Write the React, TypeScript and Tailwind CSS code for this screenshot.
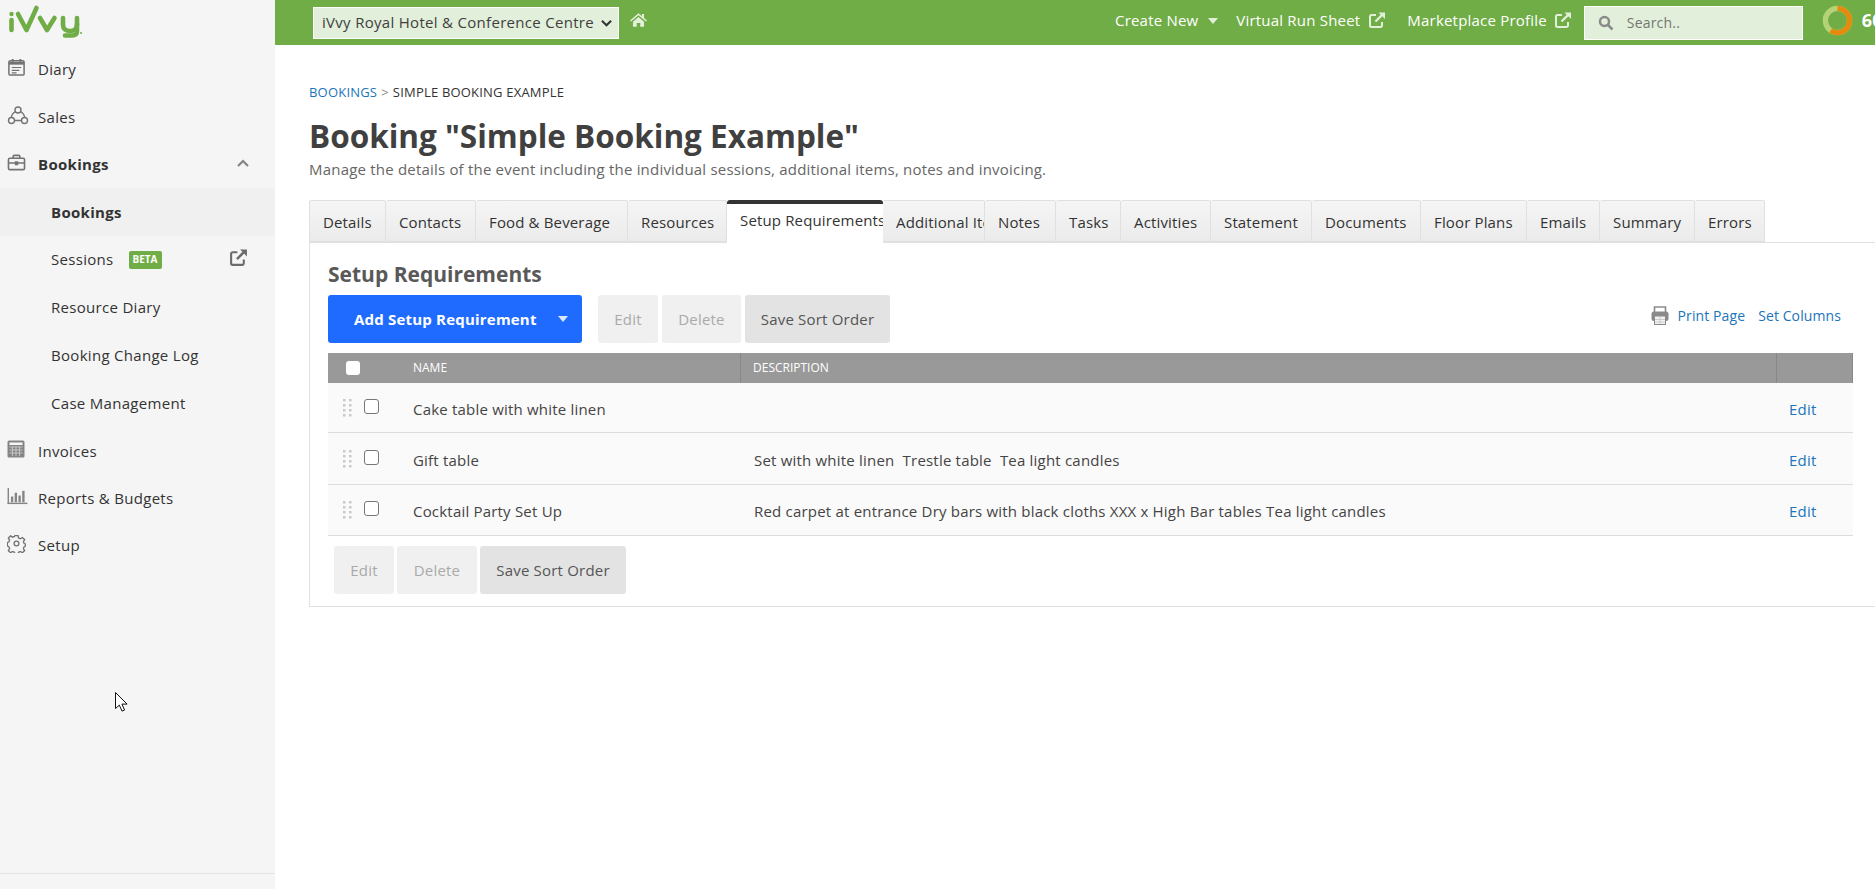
import React from "react";

const font = { fontFamily: '"Open Sans", sans-serif' };

function Ext({ className = "" }: { className?: string }) {
  return (
    <svg viewBox="0 0 18 18" className={className} fill="none" stroke="currentColor">
      <path d="M8 4H3.500A1.500 1.500 0 0 0 2 5.500v9A1.500 1.500 0 0 0 3.500 16h9a1.500 1.500 0 0 0 1.500-1.500V11" strokeWidth="2" />
      <path d="M7.500 10.500 15 3" strokeWidth="2.400" />
      <path d="M10.500 1.500h6.500V8z" fill="currentColor" stroke="none" />
    </svg>
  );
}

function Logo() {
  return (
    <svg viewBox="0 0 90 42" className="w-[90px] h-[42px]" fill="none" stroke="#70ad47" strokeWidth="4.600" strokeLinecap="round" strokeLinejoin="round">
      <circle cx="11.500" cy="14" r="2.200" fill="#70ad47" stroke="none" />
      <path d="M11.500 20v10" />
      <path d="M18 14 26.500 30 36.500 8" />
      <path d="M40 18 47 30 54.500 18" />
      <path d="M63 18v7c0 4 3 6 7 6s7-2 7-6v-7" />
      <path d="M77 24v7c0 3-2 4.500-5 4.500h-7" />
      <circle cx="81" cy="33" r="1" fill="#70ad47" stroke="none" />
    </svg>
  );
}

const G = "fill-none stroke-[#737373]";

const icons: Record<string, React.ReactNode> = {
  diary: (
    <svg viewBox="0 0 20 20" className={`w-[19px] h-[19px] ${G}`} strokeWidth="1.600">
      <rect x="2" y="3" width="16" height="15" rx="1.500" />
      <path d="M2 5.500h16" strokeWidth="3" />
      <path d="M6 1v3M14 1v3" strokeWidth="2" />
      <path d="M5 10h10M5 13h8M5 15.700h5" strokeWidth="1.200" />
    </svg>
  ),
  sales: (
    <svg viewBox="0 0 22 20" className={`w-[22px] h-[20px] ${G}`} strokeWidth="1.400">
      <circle cx="11" cy="5" r="3" />
      <circle cx="4.500" cy="15.500" r="3" />
      <circle cx="17.500" cy="15.500" r="3" />
      <path d="M8.500 6.500C6 8 4.500 10 4.300 12.500M13.500 6.500c2.500 1.500 4 3.500 4.200 6M7.500 15.500h7" />
    </svg>
  ),
  bookings: (
    <svg viewBox="0 0 20 18" className={`w-[19px] h-[17px] ${G}`} strokeWidth="1.700">
      <rect x="1.500" y="4.500" width="17" height="12" rx="1.500" />
      <path d="M6.500 4.500V2.500a1 1 0 0 1 1-1h5a1 1 0 0 1 1 1v2M1.500 9.500h17M9 8.500h2v2.500H9z" />
    </svg>
  ),
  invoices: (
    <svg viewBox="0 0 18 18" className="w-[18px] h-[18px]">
      <rect x="0.500" y="0.500" width="17" height="17" rx="1.500" fill="#858585" />
      <rect x="2.500" y="2.500" width="13" height="2.500" fill="#f5f5f5" />
      <path d="M2.500 7h13M2.500 10h13M2.500 13h13M5.500 6.500V16M9 6.500V16M12.500 6.500V16" stroke="#c4c4c4" strokeWidth="1" />
    </svg>
  ),
  reports: (
    <svg viewBox="0 0 22 18" className="w-[21px] h-[17px]" fill="#858585">
      <rect x="0.500" y="0" width="1.500" height="17" />
      <rect x="0.500" y="15.500" width="21" height="1.500" />
      <rect x="4" y="9" width="2.500" height="6" />
      <rect x="8" y="5" width="2.500" height="10" />
      <rect x="12" y="8" width="2.500" height="7" />
      <rect x="16" y="3" width="2.500" height="12" />
    </svg>
  ),
  setup: (
    <svg viewBox="0 0 24 24" className={`w-[19px] h-[19px] ${G}`} strokeWidth="1.700">
      <path d="M10 2h4l.6 3 2.300 1 2.600-1.600 2.800 2.800-1.600 2.600 1 2.300 1.800.6v2.400l-1.800.9-1 2.300 1.600 2.600-2.800 2.800-2.600-1.600-2.300 1-.6 1.800h-4l-.6-1.800-2.300-1-2.600 1.600-2.800-2.800 1.600-2.600-1-2.300-1.800-.9V10.700l1.800-.6 1-2.300-1.600-2.600 2.800-2.800 2.600 1.600 2.300-1z" />
      <circle cx="12" cy="12" r="3" />
    </svg>
  ),
};

function TopItem({ icon, label, bold }: { icon: string; label: string; bold?: boolean }) {
  return (
    <div className="h-[47.300px] flex items-center pl-[7px] pr-[26px] shrink-0">
      <span className="w-[31px] flex justify-start items-center -mt-[4px]">{icons[icon]}</span>
      <span className={`text-[15px] tracking-[0.3px] text-[#333] ${bold ? "font-bold" : ""}`}>{label}</span>
      {bold && (
        <svg viewBox="0 0 12 8" className="w-[12px] h-[8px] ml-auto mb-[3px]" fill="none" stroke="#858585" strokeWidth="2.200">
          <path d="M1 7l5-5 5 5" />
        </svg>
      )}
    </div>
  );
}

function SubItem({ label, active, beta }: { label: string; active?: boolean; beta?: boolean }) {
  return (
    <div className={`h-[47.900px] flex items-center pl-[51px] pr-[27px] shrink-0 ${active ? "bg-[#f0f0f0]" : ""}`}>
      <span className={`text-[15px] tracking-[0.3px] text-[#333] ${active ? "font-bold" : ""}`}>{label}</span>
      {beta && (
        <>
          <span className="ml-[15px] h-[18px] w-[33px] rounded-[2px] bg-[#70ad47] text-white text-[10px] font-bold flex items-center justify-center">BETA</span>
          <Ext className="w-[19px] h-[19px] ml-auto text-[#6b6b6b] -mt-[4px]" />
        </>
      )}
    </div>
  );
}

function Sidebar() {
  return (
    <aside className="w-[275px] h-full bg-[#f5f5f5] shrink-0 flex flex-col relative">
      <div className="h-[46px] shrink-0">
        <Logo />
      </div>
      <TopItem icon="diary" label="Diary" />
      <TopItem icon="sales" label="Sales" />
      <TopItem icon="bookings" label="Bookings" bold />
      <SubItem label="Bookings" active />
      <SubItem label="Sessions" beta />
      <SubItem label="Resource Diary" />
      <SubItem label="Booking Change Log" />
      <SubItem label="Case Management" />
      <TopItem icon="invoices" label="Invoices" />
      <TopItem icon="reports" label="Reports & Budgets" />
      <TopItem icon="setup" label="Setup" />
      <div className="mt-auto mb-[15px] border-t border-[#e3e3e3]" />
    </aside>
  );
}

function Header() {
  return (
    <header className="h-[45px] bg-[#70ad47] flex items-center text-white text-[15px] tracking-[0.2px] shrink-0 pl-[38px] whitespace-nowrap overflow-hidden">
      <div className="w-[306px] shrink-0 h-[32px] bg-[#e2efda] border border-white text-[#3f3f3f] tracking-[0.3px] flex items-center pl-[8px] pr-[6px] justify-between">
        <span>iVvy Royal Hotel &amp; Conference Centre</span>
        <svg viewBox="0 0 12 8" className="w-[11px] h-[8px] shrink-0" fill="none" stroke="#333" strokeWidth="2.200">
          <path d="M1 1.500l5 5 5-5" />
        </svg>
      </div>
      <svg viewBox="0 0 20 16" className="w-[17px] h-[14px] shrink-0 ml-[11px] -mt-[5px]" fill="#e2efda">
        <path d="M10 0 0 8.500l1.200 1.300L10 2.500l8.800 7.300L20 8.500 16.500 5.600V1h-2.500v2.500zM3.500 10v6h4.500v-4.500h4V16h4.500v-6L10 4.500z" />
      </svg>
      <span className="ml-[468px] -mt-[4px] shrink-0">Create New</span>
      <span className="ml-[10px] -mt-[3px] shrink-0 w-0 h-0 border-l-[5px] border-r-[5px] border-t-[6px] border-l-transparent border-r-transparent border-t-[#e2efda]" />
      <span className="ml-[18px] -mt-[4px] shrink-0">Virtual Run Sheet</span>
      <Ext className="w-[18px] h-[18px] shrink-0 ml-[8px] -mt-[6px] text-[#e2efda]" />
      <span className="ml-[21px] -mt-[4px] shrink-0">Marketplace Profile</span>
      <Ext className="w-[18px] h-[18px] shrink-0 ml-[7px] -mt-[6px] text-[#e2efda]" />
      <div className="ml-[12px] w-[219px] shrink-0 h-[34px] bg-[#e2efda] border border-white flex items-center pl-[13px] text-[#757575] text-[14px]">
        <svg viewBox="0 0 16 16" className="w-[16px] h-[16px]" fill="none" stroke="#8a8a8a" strokeWidth="2.500">
          <circle cx="6.500" cy="6.500" r="4.500" />
          <path d="M10 10l4.500 4.500" />
        </svg>
        <span className="ml-[13px]">Search..</span>
      </div>
      <svg viewBox="0 0 32 32" className="w-[31px] h-[31px] shrink-0 ml-[19px] -mt-[5px]" fill="none" strokeWidth="5.500">
        <circle cx="16" cy="16" r="12.500" stroke="#b5d376" />
        <path d="M16 3.500A12.500 12.500 0 1 1 9 26.400" stroke="#e38b0c" />
      </svg>
      <span className="ml-[9px] shrink-0 font-bold text-[18px] -mt-[4px]">60%</span>
    </header>
  );
}

const tabs = [
  { l: "Details", w: "w-[77px]" },
  { l: "Contacts", w: "w-[90px]" },
  { l: "Food & Beverage", w: "w-[152px]" },
  { l: "Resources", w: "w-[99px]" },
  { l: "Setup Requirements", w: "w-[156px]", active: true },
  { l: "Additional Items", w: "w-[102px]" },
  { l: "Notes", w: "w-[71px]" },
  { l: "Tasks", w: "w-[65px]" },
  { l: "Activities", w: "w-[90px]" },
  { l: "Statement", w: "w-[101px]" },
  { l: "Documents", w: "w-[109px]" },
  { l: "Floor Plans", w: "w-[106px]" },
  { l: "Emails", w: "w-[73px]" },
  { l: "Summary", w: "w-[95px]" },
  { l: "Errors", w: "w-[70px]" },
];

function Tabs() {
  return (
    <div className="flex h-[43px] border-b border-[#e0e0e0] text-[15px] tracking-[0.15px] text-[#333] whitespace-nowrap">
      {tabs.map((t) =>
        t.active ? (
          <div key={t.l} className={`${t.w} h-[43px] shrink-0 bg-white border-t-[4px] border-[#333] pl-[13px] pt-[5px] overflow-hidden rounded-t-[3px] relative z-10`}>
            {t.l}
          </div>
        ) : (
          <div key={t.l} className={`${t.w} h-[42px] shrink-0 border border-[#e0e0e0] border-l-0 first:border-l bg-gradient-to-b from-[#f5f5f5] to-[#ebebeb] pl-[13px] pt-[10px] overflow-hidden rounded-t-[2px]`}>
            {t.l}
          </div>
        )
      )}
    </div>
  );
}

function Btn({ label, w, kind }: { label: string; w: string; kind: "off" | "save" }) {
  return (
    <div className={`${w} h-[48px] rounded-[3px] flex items-center justify-center text-[15px] tracking-[0.2px] ${kind === "off" ? "bg-[#f0f0f0] text-[#aaa]" : "bg-[#e3e3e3] text-[#555]"}`}>
      {label}
    </div>
  );
}

const rows = [
  { n: "Cake table with white linen", d: "", h: "h-[50px]", box: "pt-[16px]", txt: "pt-[15px]" },
  { n: "Gift table", d: "Set with white linen\u00a0 Trestle table\u00a0 Tea light candles", h: "h-[52px]", box: "pt-[17px]", txt: "pt-[16px]" },
  { n: "Cocktail Party Set Up", d: "Red carpet at entrance Dry bars with black cloths XXX x High Bar tables Tea light candles", h: "h-[51px]", box: "pt-[16px]", txt: "pt-[15px]" },
];

function Drag() {
  return (
    <svg viewBox="0 0 9 18" className="w-[9px] h-[18px]" fill="#c9c9c9">
      {[0, 5, 10, 15].map((y) => (
        <React.Fragment key={y}>
          <rect x="0" y={y} width="2.500" height="2.500" />
          <rect x="6" y={y} width="2.500" height="2.500" />
        </React.Fragment>
      ))}
    </svg>
  );
}

function Table() {
  return (
    <div className="w-[1525px] mt-[10px] text-[15px] tracking-[0.2px] text-[#444]">
      <div className="h-[30px] bg-[#999] flex text-white text-[12px] tracking-normal items-center border-r border-[#888]">
        <div className="w-[74px] h-full pl-[18px] flex items-center">
          <span className="block w-[14px] h-[14px] rounded-[3px] bg-white" />
        </div>
        <div className="w-[339px] h-full pl-[11px] flex items-center border-r border-[#888]">NAME</div>
        <div className="w-[1036px] h-full pl-[12px] flex items-center border-r border-[#888]">DESCRIPTION</div>
        <div className="flex-1" />
      </div>
      {rows.map((r) => (
        <div key={r.n} className={`${r.h} bg-[#fafafa] border-b border-[#ddd] flex`}>
          <div className={`w-[74px] pl-[15px] ${r.box} flex gap-[12px] items-start`}>
            <Drag />
            <span className="block w-[15px] h-[15px] rounded-[3px] border border-[#777] bg-white" />
          </div>
          <div className={`w-[340px] pl-[11px] ${r.txt}`}>{r.n}</div>
          <div className={`w-[1035px] pl-[12px] ${r.txt} whitespace-nowrap`}>{r.d}</div>
          <div className={`flex-1 pl-[12px] ${r.txt} text-[#1a75bb]`}>Edit</div>
        </div>
      ))}
    </div>
  );
}

function Cursor() {
  return (
    <svg viewBox="0 0 14 20" className="absolute left-[115px] top-[692px] w-[14px] h-[20px]" fill="#fff" stroke="#111" strokeWidth="1">
      <path d="M0.500 0.500v16l3.800-3.400 2.700 6 2.600-1.100-2.700-5.900h5.200z" />
    </svg>
  );
}

export default function App() {
  return (
    <div className="w-[1875px] h-[889px] overflow-hidden flex bg-white relative" style={font}>
      <Sidebar />
      <div className="flex-1 min-w-0 flex flex-col">
        <Header />
        <main className="flex-1 pl-[34px] overflow-hidden">
          <div className="pt-[38px] text-[13px] tracking-[0.2px] text-[#333] leading-[18px]">
            <span className="text-[#1a75bb]">BOOKINGS</span>
            <span className="text-[#888] mx-[4px]">&gt;</span>SIMPLE BOOKING EXAMPLE
          </div>
          <h1 className="mt-[13px] text-[31.500px] leading-[44px] font-bold text-[#404040] whitespace-nowrap">Booking "Simple Booking Example"</h1>
          <p className="text-[15px] tracking-[0.2px] leading-[18px] text-[#666] mt-[2px]">Manage the details of the event including the individual sessions, additional items, notes and invoicing.</p>
          <div className="mt-[22px] w-[1640px]">
            <Tabs />
            <div className="h-[364px] border-l border-b border-[#e0e0e0] pl-[18px]">
              <h2 className="pt-[17px] text-[21px] leading-[28px] font-bold text-[#595959]">Setup Requirements</h2>
              <div className="flex items-start mt-[7px] w-[1525px]">
                <div className="w-[254px] h-[48px] rounded-[3px] bg-[#1f6bff] text-white font-bold text-[15px] tracking-[0.2px] flex items-center pl-[26px]">
                  Add Setup Requirement
                  <span className="ml-[21px] w-0 h-0 border-l-[5px] border-r-[5px] border-t-[6px] border-l-transparent border-r-transparent border-t-[#dbe7ff]" />
                </div>
                <div className="ml-[16px] flex gap-[4px]">
                  <Btn label="Edit" w="w-[60px]" kind="off" />
                  <Btn label="Delete" w="w-[79px]" kind="off" />
                  <Btn label="Save Sort Order" w="w-[145px]" kind="save" />
                </div>
                <div className="ml-auto mr-[12px] mt-[10px] flex items-center text-[14px] tracking-[0.1px] text-[#1a75bb]">
                  <svg viewBox="0 0 18 19" className="w-[18px] h-[19px] mr-[9px]">
                    <path d="M3.500 6V1h11v5" fill="none" stroke="#8a8a8a" strokeWidth="1.600" />
                    <rect x="0.500" y="5.500" width="17" height="9.500" rx="2.500" fill="#8a8a8a" />
                    <rect x="3.500" y="10" width="11" height="8.500" fill="#f2f2f2" stroke="#8a8a8a" strokeWidth="1" />
                    <path d="M9 11v7M4 13.500h10M4 16h10" stroke="#c4c4c4" strokeWidth="0.800" />
                  </svg>
                  <span>Print Page</span>
                  <span className="ml-[13px]">Set Columns</span>
                </div>
              </div>
              <Table />
              <div className="flex gap-[3px] ml-[6px] mt-[10px]">
                <Btn label="Edit" w="w-[60px]" kind="off" />
                <Btn label="Delete" w="w-[80px]" kind="off" />
                <Btn label="Save Sort Order" w="w-[146px]" kind="save" />
              </div>
            </div>
          </div>
        </main>
      </div>
      <Cursor />
    </div>
  );
}
